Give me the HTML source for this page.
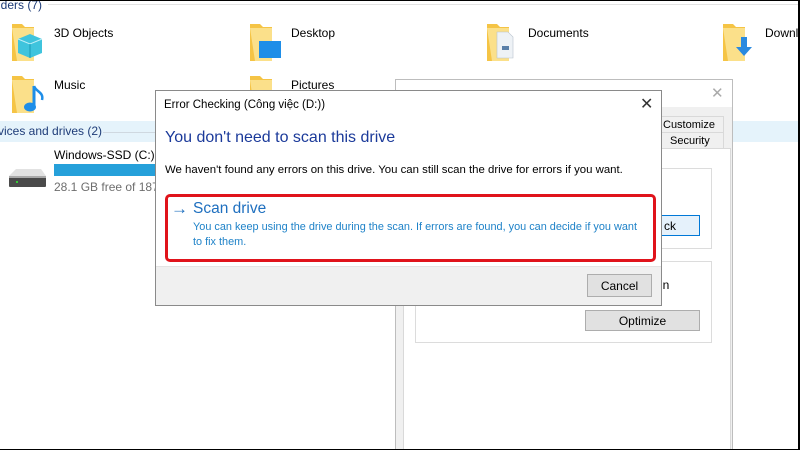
<!DOCTYPE html>
<html><head><meta charset="utf-8"><style>
*{margin:0;padding:0;box-sizing:border-box}
html,body{width:800px;height:450px;overflow:hidden}
body{background:#fff;font-family:"Liberation Sans",sans-serif;position:relative;color:#000}
.a{position:absolute}
.lbl{font-size:12px;white-space:nowrap}
</style></head><body>
<div class="a" style="left:0;top:0;width:800px;height:450px;border-top:1px solid #000;border-right:2px solid #000;border-bottom:1px solid #000;z-index:50;pointer-events:none"></div>
<div class="a lbl" style="left:-2px;top:-2px;color:#1e3c78;font-size:12px">iders (7)</div>
<div class="a" style="left:48px;top:4px;width:752px;height:1px;background:#e3e3e3"></div>

<svg class="a" style="left:10px;top:20px" width="40" height="44"><path d="M2 4h10l3 3h9v34H2z" fill="#f5c445"/><path d="M2 8h22v33H7z" fill="#fbe08a"/><path d="M20 14l12 5v14l-12 5-12-5V19z" fill="#3fc4dd"/><path d="M8 19l12 5 12-5" stroke="#bfeff7" fill="none"/><path d="M20 24v14" stroke="#1a9ab5"/></svg>
<div class="a lbl" style="left:54px;top:26px">3D Objects</div>
<svg class="a" style="left:248px;top:20px" width="40" height="44"><path d="M2 4h10l3 3h9v34H2z" fill="#f5c445"/><path d="M2 8h22v33H7z" fill="#fbe08a"/><rect x="11" y="21" width="22" height="17" fill="#1e8ee8"/></svg>
<div class="a lbl" style="left:291px;top:26px">Desktop</div>
<svg class="a" style="left:485px;top:20px" width="40" height="44"><path d="M2 4h10l3 3h9v34H2z" fill="#f5c445"/><path d="M2 8h22v33H7z" fill="#fbe08a"/><path d="M12 12h11l5 5v21H12z" fill="#eef2f6" stroke="#b8c2cc" stroke-width=".6"/><rect x="17" y="26" width="7" height="4" fill="#5a7fa8"/></svg>
<div class="a lbl" style="left:528px;top:26px">Documents</div>
<svg class="a" style="left:721px;top:20px" width="40" height="44"><path d="M2 4h10l3 3h9v34H2z" fill="#f5c445"/><path d="M2 8h22v33H7z" fill="#fbe08a"/><path d="M20 17h6v10h5l-8 9-8-9h5z" fill="#2a8ae0"/></svg>
<div class="a lbl" style="left:765px;top:26px">Downloads</div>
<svg class="a" style="left:10px;top:72px" width="40" height="44"><path d="M2 4h10l3 3h9v34H2z" fill="#f5c445"/><path d="M2 8h22v33H7z" fill="#fbe08a"/><path d="M24 14v20" stroke="#1e8ee8" stroke-width="3"/><ellipse cx="20" cy="35" rx="6" ry="4.5" fill="#1e8ee8"/><path d="M24 14c2 6 10 6 8 14" stroke="#1e8ee8" stroke-width="2.5" fill="none"/></svg>
<div class="a lbl" style="left:54px;top:78px">Music</div>
<svg class="a" style="left:248px;top:72px" width="40" height="44"><path d="M2 4h10l3 3h9v34H2z" fill="#f5c445"/><path d="M2 8h22v33H7z" fill="#fbe08a"/></svg>
<div class="a lbl" style="left:291px;top:78px">Pictures</div>

<div class="a" style="left:0;top:121px;width:800px;height:21px;background:#e5f3fb"></div>
<div class="a lbl" style="left:-2px;top:124px;color:#1e3c78">vices and drives (2)</div>
<div class="a" style="left:103px;top:132px;width:60px;height:1px;background:#cfd8e0"></div>
<svg class="a" style="left:6px;top:166px" width="42" height="26"><path d="M3 10l7-7h25l5 7z" fill="#e2e2e2"/><rect x="3" y="10" width="37" height="11" rx="1" fill="#4a4a4a"/><rect x="3" y="10" width="37" height="2" fill="#aaa"/><rect x="10" y="15" width="2" height="2" fill="#3c3"/></svg>
<div class="a lbl" style="left:54px;top:148px">Windows-SSD (C:)</div>
<div class="a" style="left:54px;top:164px;width:110px;height:12px;background:#26a0da"></div>
<div class="a lbl" style="left:54px;top:180px;color:#6d6d6d">28.1 GB free of 187 GB</div>

<div class="a" style="left:395px;top:79px;width:338px;height:371px;background:#f0f0f0;border:1px solid #bdbdbd;border-bottom:none">
  <div class="a" style="left:0;top:0;width:336px;height:27px;background:#fff"></div>
  <div class="a" style="left:315px;top:4px;color:#aaa;font-size:15px;font-weight:300">✕</div>
  <div class="a" style="left:264px;top:36px;width:64px;height:17px;border:1px solid #d9d9d9;background:#f0f0f0;font-size:11px;padding:2px 0 0 2px">Customize</div>
  <div class="a" style="left:264px;top:52px;width:64px;height:17px;border:1px solid #d9d9d9;background:#f0f0f0;font-size:11px;padding:2px 0 0 9px">Security</div>
  <div class="a" style="left:7px;top:68px;width:328px;height:310px;background:#fff;border:1px solid #d9d9d9"></div>
  <div class="a" style="left:19px;top:88px;width:297px;height:81px;border:1px solid #dcdcdc"></div>
  <div class="a" style="left:19px;top:181px;width:297px;height:82px;border:1px solid #dcdcdc"></div>
  <div class="a" style="left:189px;top:135px;width:115px;height:21px;border:1px solid #0078d7;background:#e5f1fb;font-size:12px;padding:3px 0 0 78px">ck</div>
  <div class="a" style="left:260px;top:198px;font-size:12px">un</div>
  <div class="a" style="left:189px;top:230px;width:115px;height:21px;border:1px solid #adadad;background:#e1e1e1;font-size:12px;text-align:center;padding-top:3px">Optimize</div>
</div>

<div class="a" style="left:155px;top:90px;width:507px;height:216px;background:#fff;border:1px solid #8a8a8a;z-index:10">
  <div class="a lbl" style="left:8px;top:8px;font-size:11.5px">Error Checking (Công việc (D:))</div>
  <div class="a" style="left:484px;top:3px;font-size:16px;color:#333">✕</div>
  <div class="a" style="left:9px;top:38px;font-size:16px;color:#1b3a9a;white-space:nowrap">You don't need to scan this drive</div>
  <div class="a lbl" style="left:9px;top:73px;font-size:11.4px">We haven't found any errors on this drive. You can still scan the drive for errors if you want.</div>
  <div class="a" style="left:9px;top:103px;width:491px;height:68px;border:3px solid #e0131b;border-radius:5px"></div>
  <div class="a" style="left:15px;top:108px;font-size:17px;color:#1e6fbf;white-space:nowrap">→</div>
  <div class="a" style="left:37px;top:109px;font-size:15.5px;color:#1e6fbf;white-space:nowrap">Scan drive</div>
  <div class="a" style="left:37px;top:129px;width:470px;font-size:10.9px;line-height:15px;color:#1e82c8">You can keep using the drive during the scan. If errors are found, you can decide if you want<br>to fix them.</div>
  <div class="a" style="left:0;top:175px;width:505px;height:39px;background:#f0f0f0;border-top:1px solid #e3e3e3"></div>
  <div class="a" style="left:431px;top:183px;width:65px;height:23px;background:#e1e1e1;border:1px solid #adadad;font-size:12px;text-align:center;padding-top:4px">Cancel</div>
</div>
</body></html>
